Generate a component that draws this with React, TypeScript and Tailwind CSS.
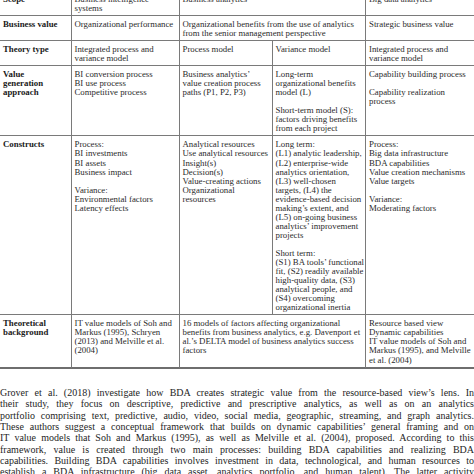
import React from "react";

const serif = { fontFamily: '"Liberation Serif", "Times New Roman", serif' };

function Lines({ lines, bold = false }: { lines: string[]; bold?: boolean }) {
  return (
    <>
      {lines.map((l, i) => (
        <div key={i} className={"h-[9.05px] leading-[9.05px] whitespace-nowrap " + (bold ? "font-bold text-[#1a1a1a]" : "")}>
          {l === "" ? "\u00a0" : l}
        </div>
      ))}
    </>
  );
}

const base = "border-b border-[#7a7a7a] pt-[4px] pb-[2px]";
const c1 = base + " border-r pl-[3px]";
const cm = base + " border-r pl-[2.5px]";
const cl = base + " pl-[3px]";
const last = " border-b-2 border-b-[#6e6e6e]";

const para = [
  "Grover et al. (2018) investigate how BDA creates strategic value from the resource-based view\u2019s lens. In",
  "their study, they focus on descriptive, predictive and prescriptive analytics, as well as on an analytics",
  "portfolio comprising text, predictive, audio, video, social media, geographic, streaming, and graph analytics.",
  "These authors suggest a conceptual framework that builds on dynamic capabilities\u2019 general framing and on",
  "IT value models that Soh and Markus (1995), as well as Melville et al. (2004), proposed. According to this",
  "framework, value is created through two main processes: building BDA capabilities and realizing BDA",
  "capabilities. Building BDA capabilities involves investment in data, technological, and human resources to",
  "establish a BDA infrastructure (big data asset, analytics portfolio, and human talent). The latter activity",
];

export default function App() {
  return (
    <div className="w-[474px] h-[474px] overflow-hidden bg-white" style={serif}>
      <div className="-mt-[9.2px] w-[474px] overflow-hidden">
        <div className="grid grid-cols-[72px_108px_93px_93px_140px] text-[8.8px] text-[#2b2b2b]">
          {/* Scope */}
          <div className={c1}><Lines bold lines={["Scope"]} /></div>
          <div className={cm}><Lines lines={["Business intelligence", "systems"]} /></div>
          <div className={cm + " col-span-2"}><Lines lines={["Business analytics"]} /></div>
          <div className={cl}><Lines lines={["Big data analytics"]} /></div>

          {/* Business value */}
          <div className={c1}><Lines bold lines={["Business value"]} /></div>
          <div className={cm}><Lines lines={["Organizational performance"]} /></div>
          <div className={cm + " col-span-2"}>
            <Lines lines={["Organizational benefits from the use of analytics", "from the senior management perspective"]} />
          </div>
          <div className={cl}><Lines lines={["Strategic business value"]} /></div>

          {/* Theory type */}
          <div className={c1}><Lines bold lines={["Theory type"]} /></div>
          <div className={cm}><Lines lines={["Integrated process and", "variance model"]} /></div>
          <div className={cm}><Lines lines={["Process model"]} /></div>
          <div className={cm}><Lines lines={["Variance model"]} /></div>
          <div className={cl}><Lines lines={["Integrated process and", "variance model"]} /></div>

          {/* Value generation approach */}
          <div className={c1}><Lines bold lines={["Value", "generation", "approach"]} /></div>
          <div className={cm}><Lines lines={["BI conversion process", "BI use process", "Competitive process"]} /></div>
          <div className={cm}><Lines lines={["Business analytics\u2019", "value creation process", "paths (P1, P2, P3)"]} /></div>
          <div className={cm}>
            <Lines lines={["Long-term", "organizational benefits", "model (L)", "", "Short-term model (S):", "factors driving benefits", "from each project"]} />
          </div>
          <div className={cl}><Lines lines={["Capability building process", "", "Capability realization", "process"]} /></div>

          {/* Constructs */}
          <div className={c1}><Lines bold lines={["Constructs"]} /></div>
          <div className={cm}>
            <Lines lines={["Process:", "BI investments", "BI assets", "Business impact", "", "Variance:", "Environmental factors", "Latency effects"]} />
          </div>
          <div className={cm}>
            <Lines lines={["Analytical resources", "Use analytical resources", "Insight(s)", "Decision(s)", "Value-creating actions", "Organizational", "resources"]} />
          </div>
          <div className={cm}>
            <Lines
              lines={[
                "Long term:",
                "(L1) analytic leadership,",
                "(L2) enterprise-wide",
                "analytics orientation,",
                "(L3) well-chosen",
                "targets, (L4) the",
                "evidence-based decision",
                "making\u2019s extent, and",
                "(L5) on-going business",
                "analytics\u2019 improvement",
                "projects",
                "",
                "Short term:",
                "(S1) BA tools\u2019 functional",
                "fit, (S2) readily available",
                "high-quality data, (S3)",
                "analytical people, and",
                "(S4) overcoming",
                "organizational inertia",
              ]}
            />
          </div>
          <div className={cl}>
            <Lines lines={["Process:", "Big data infrastructure", "BDA capabilities", "Value creation mechanisms", "Value targets", "", "Variance:", "Moderating factors"]} />
          </div>

          {/* Theoretical background */}
          <div className={c1 + last}><Lines bold lines={["Theoretical", "background"]} /></div>
          <div className={cm + last}>
            <Lines lines={["IT value models of Soh and", "Markus (1995), Schryen", "(2013) and Melville et al.", "(2004)"]} />
          </div>
          <div className={cm + " col-span-2" + last}>
            <Lines
              lines={[
                "16 models of factors affecting organizational",
                "benefits from business analytics, e.g. Davenport et",
                "al.\u2019s DELTA model of business analytics success",
                "factors",
              ]}
            />
          </div>
          <div className={cl + last}>
            <Lines lines={["Resource based view", "Dynamic capabilities", "IT value models of Soh and", "Markus (1995), and Melville", "et al. (2004)"]} />
          </div>
        </div>
      </div>

      <div className="mt-[18.5px] text-[10px] text-[#1e1e1e]">
        {para.map((l, i) => (
          <div key={i} className="leading-[11.3px] text-justify [text-align-last:justify] overflow-hidden h-[11.3px]">
            {l}
          </div>
        ))}
      </div>
    </div>
  );
}
